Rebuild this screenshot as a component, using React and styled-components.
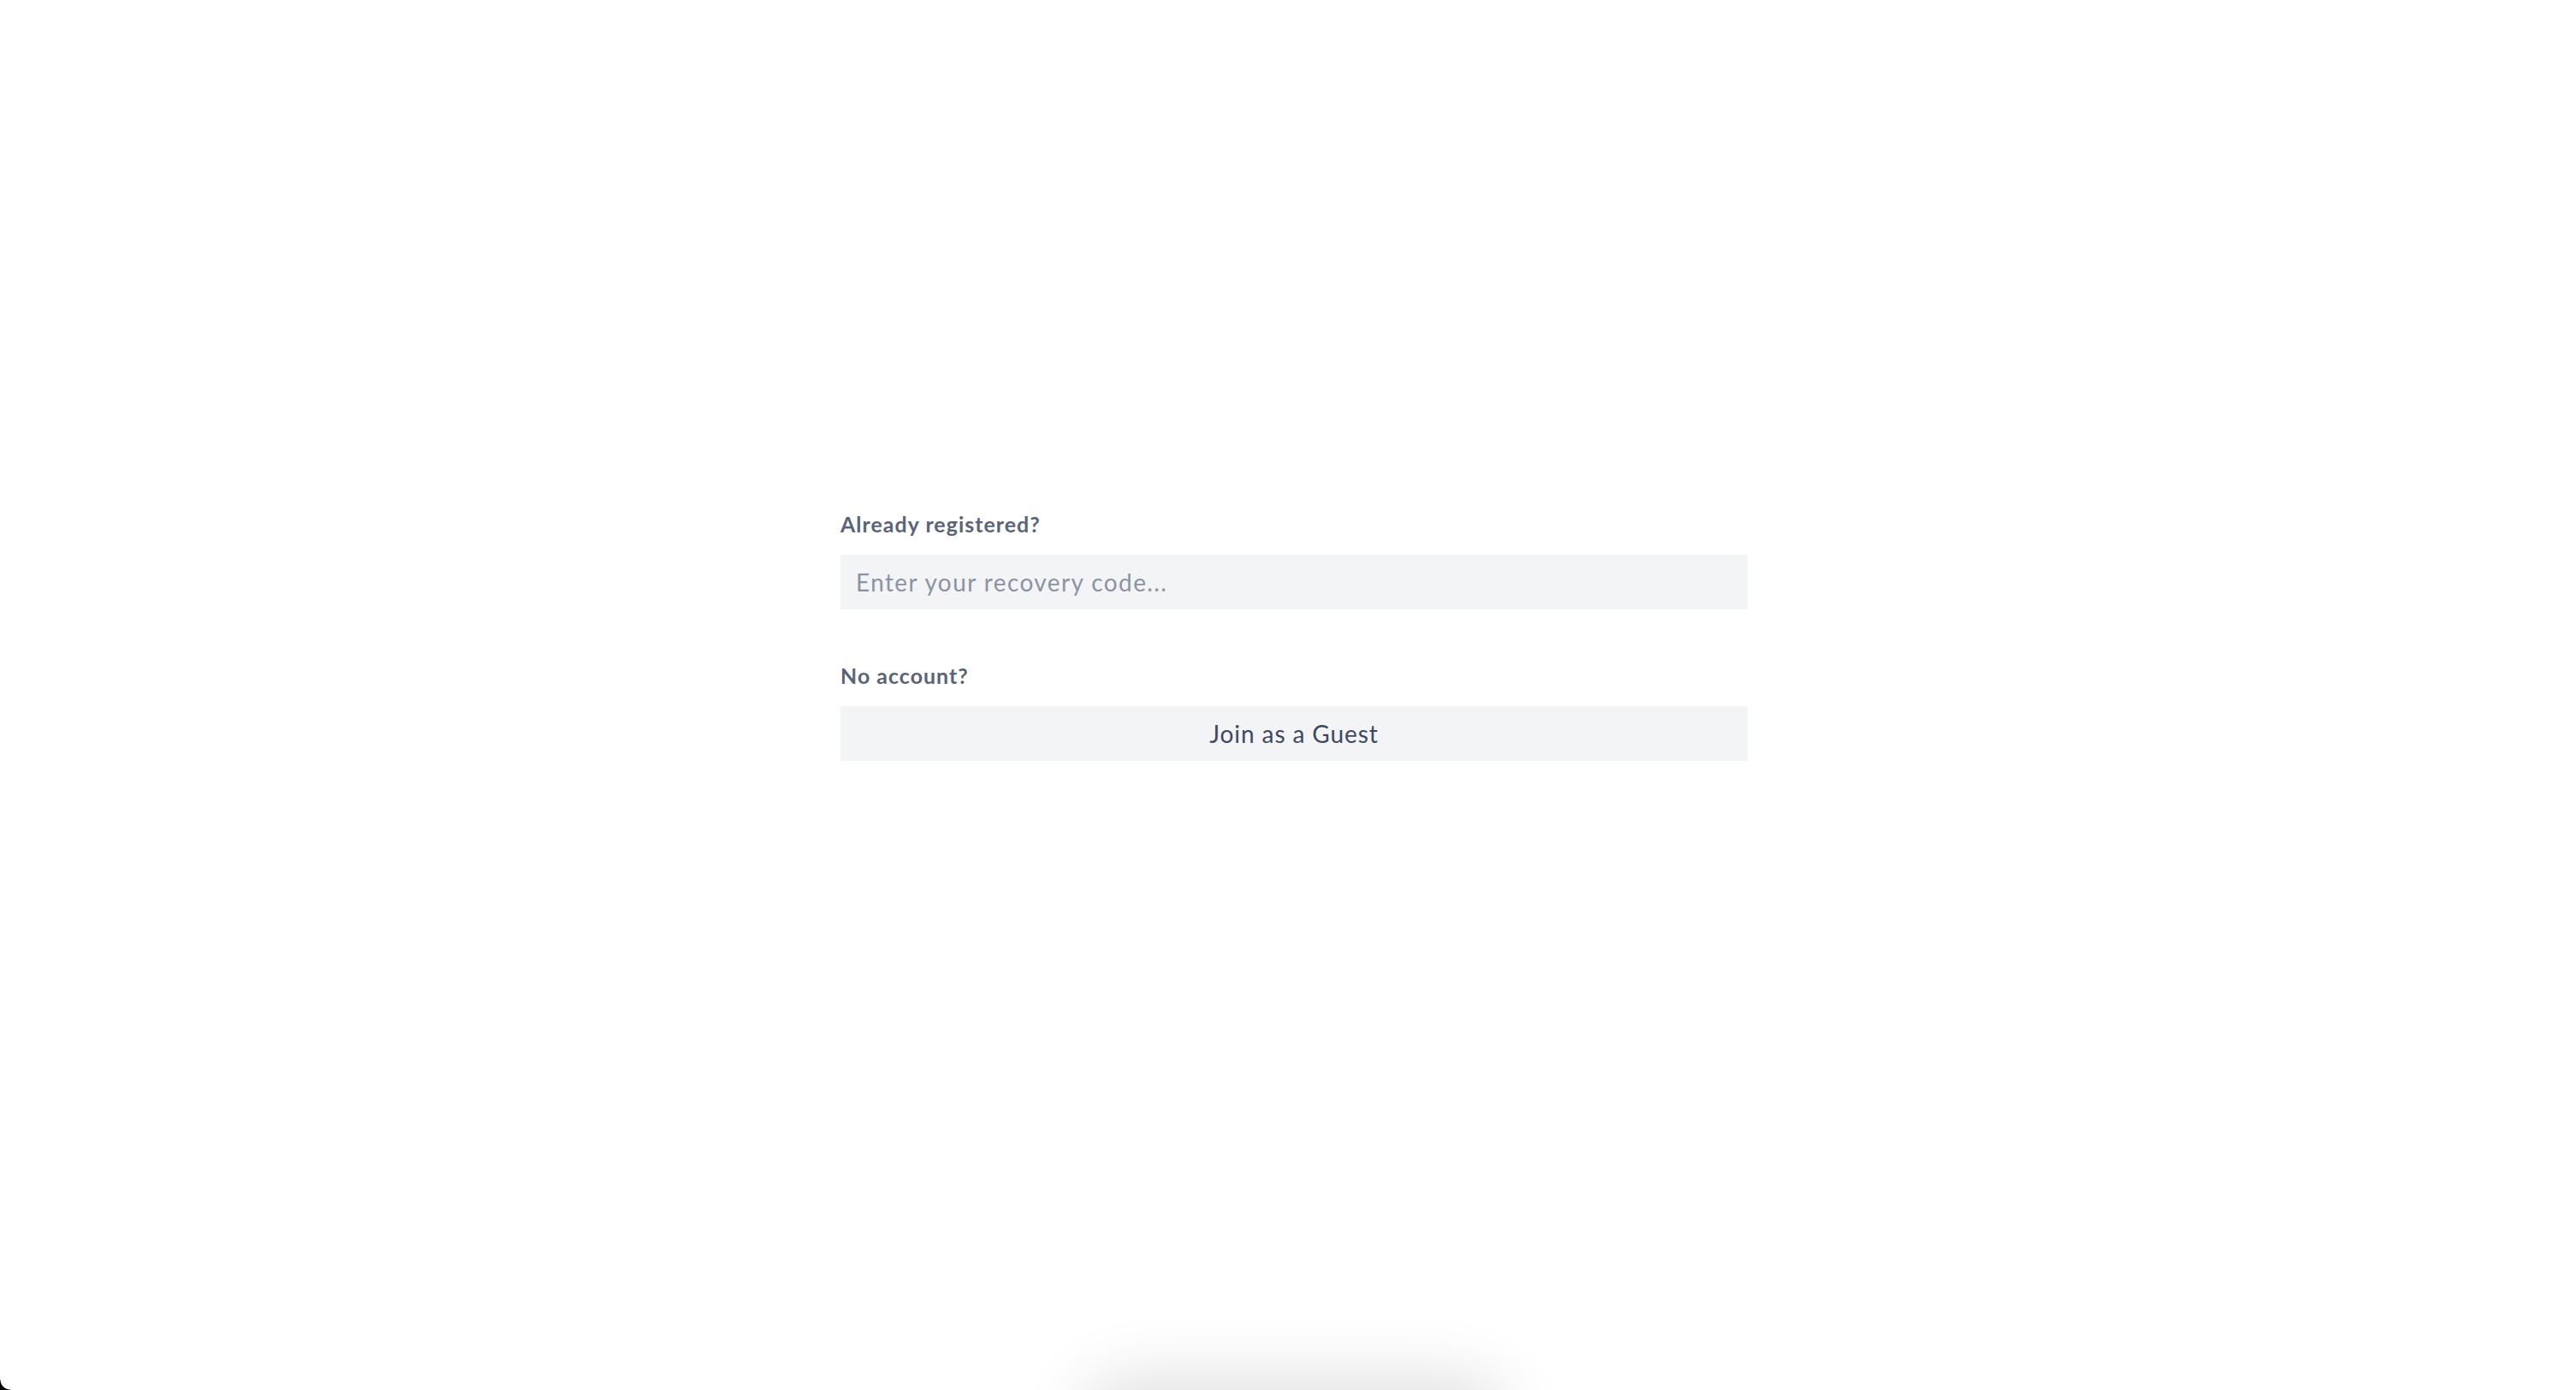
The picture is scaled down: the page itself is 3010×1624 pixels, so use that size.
import React from "react";
import styled, { createGlobalStyle } from "styled-components";

const Global = createGlobalStyle`
  html, body { margin: 0; padding: 0; background: #ffffff; }
  body { font-family: Lato, "Open Sans", sans-serif; overflow: hidden; }
  #root { height: 100vh; }
`;

const Page = styled.div`
  position: relative;
  height: 100vh;
  display: flex;
  justify-content: center;
  padding-left: 14px;
  box-sizing: border-box;
  overflow: hidden;
`;

const Form = styled.div`
  width: 1060px;
  padding-top: 600px;
  display: flex;
  flex-direction: column;
`;

const Label = styled.label`
  font-size: 25px;
  line-height: 25px;
  font-weight: 700;
  letter-spacing: 1px;
  color: #5a6478;
  margin-bottom: 23px;
  margin-top: ${(p) => p.$gap || 0}px;
`;

const Field = styled.input`
  height: 64px;
  border: none;
  outline: none;
  background: #f3f4f6;
  padding: 0 18px;
  font-family: inherit;
  font-size: 28px;
  letter-spacing: 1.4px;
  color: #3d4863;
  box-sizing: border-box;
  &::placeholder { color: #8b93a3; }
`;

const GuestButton = styled.button`
  height: 64px;
  border: none;
  background: #f3f4f6;
  font-family: inherit;
  font-size: 28px;
  letter-spacing: 0.9px;
  color: #3d4863;
  cursor: pointer;
`;

const BottomGlow = styled.div`
  position: absolute;
  left: 50%;
  bottom: -70px;
  width: 470px;
  height: 70px;
  margin-left: -228px;
  border-radius: 40px;
  box-shadow: 0 0 80px 10px rgba(0, 0, 0, 0.14);
`;

const Corner = styled.div`
  position: absolute;
  left: 0;
  bottom: 0;
  width: 12px;
  height: 12px;
  background: radial-gradient(circle at 12px 0, transparent 11px, #000 12px);
`;

export default function App() {
  return (
    <>
      <Global />
      <Page>
        <Form>
          <Label>Already registered?</Label>
          <Field placeholder="Enter your recovery code..." />
          <Label $gap={65}>No account?</Label>
          <GuestButton>Join as a Guest</GuestButton>
        </Form>
        <BottomGlow />
        <Corner />
      </Page>
    </>
  );
}
